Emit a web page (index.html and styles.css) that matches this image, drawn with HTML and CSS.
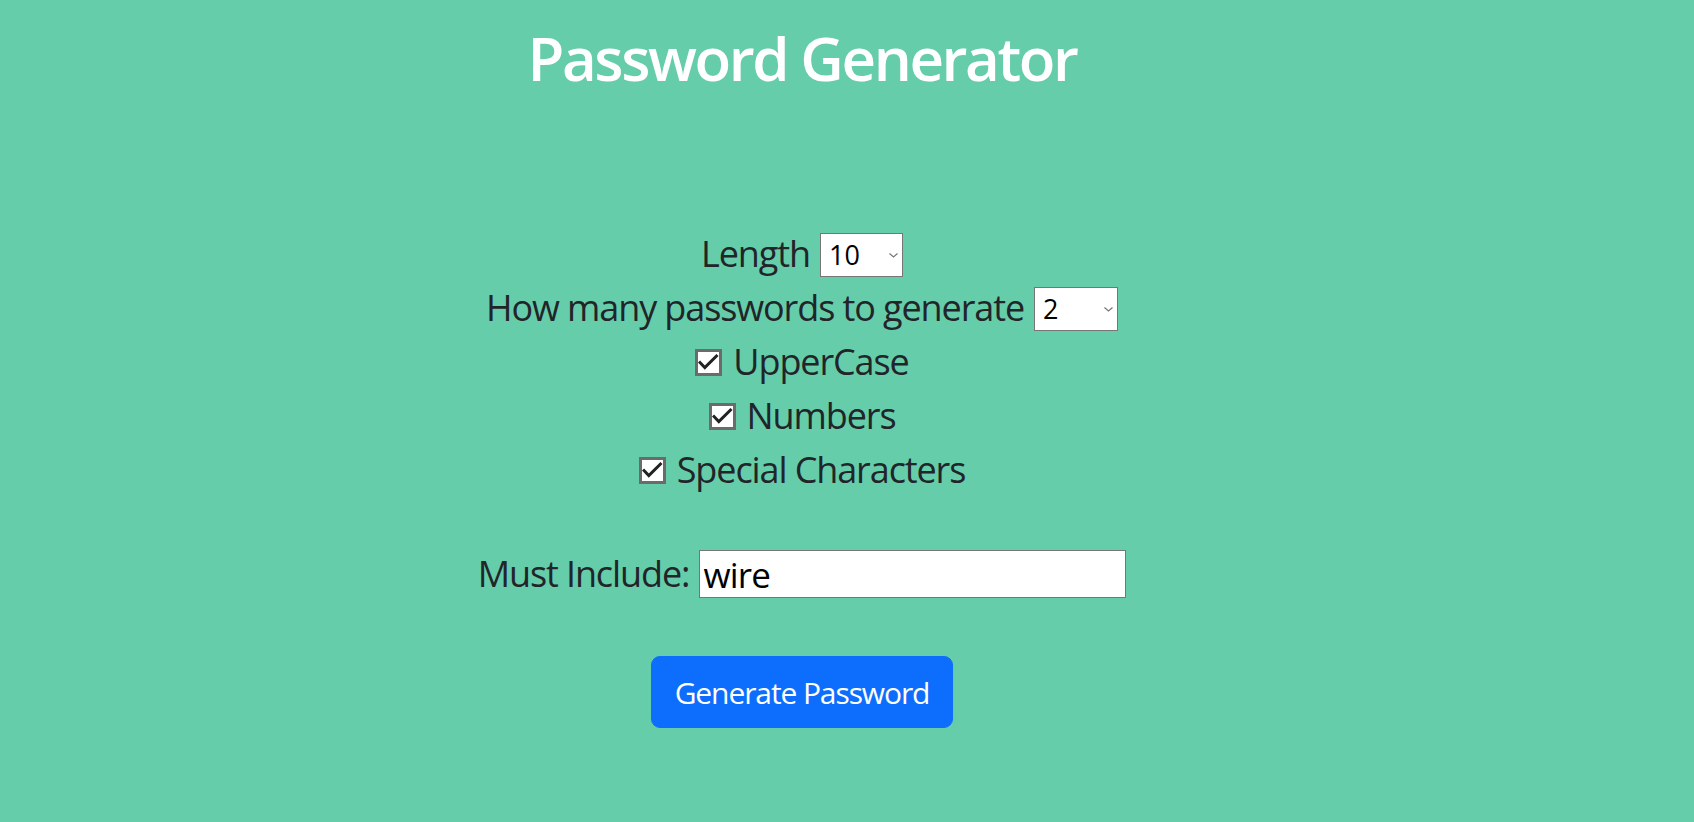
FILE: index.html
```html
<!DOCTYPE html>
<html lang="en">
<head>
<meta charset="utf-8">
<title>Password Generator</title>
<link rel="stylesheet" href="styles.css">
</head>
<body>
<div class="page">
  <h1 class="title">Password Generator</h1>
  <form class="form">
    <div class="row">
      <label for="len">Length</label>
      <span class="select-wrap sel-len">
        <select id="len" class="select"><option>10</option></select>
        <svg class="chev" width="9" height="5" viewBox="0 0 9 5"><path d="M0.5 0.5 L4.5 4 L8.5 0.5" fill="none" stroke="#777" stroke-width="1.2"/></svg>
      </span>
    </div>
    <div class="row">
      <label for="cnt">How many passwords to generate</label>
      <span class="select-wrap sel-cnt">
        <select id="cnt" class="select"><option>2</option></select>
        <svg class="chev" width="9" height="5" viewBox="0 0 9 5"><path d="M0.5 0.5 L4.5 4 L8.5 0.5" fill="none" stroke="#777" stroke-width="1.2"/></svg>
      </span>
    </div>
    <div class="row">
      <label class="check"><span class="box"><svg width="21" height="21" viewBox="0 0 21 21"><path d="M1 9.5 L6.8 15.5 L19.5 3" fill="none" stroke="#222" stroke-width="3"/></svg></span>UpperCase</label>
    </div>
    <div class="row">
      <label class="check"><span class="box"><svg width="21" height="21" viewBox="0 0 21 21"><path d="M1 9.5 L6.8 15.5 L19.5 3" fill="none" stroke="#222" stroke-width="3"/></svg></span>Numbers</label>
    </div>
    <div class="row">
      <label class="check"><span class="box"><svg width="21" height="21" viewBox="0 0 21 21"><path d="M1 9.5 L6.8 15.5 L19.5 3" fill="none" stroke="#222" stroke-width="3"/></svg></span>Special Characters</label>
    </div>
    <div class="row row-include">
      <label for="inc">Must Include:</label>
      <input id="inc" class="text-input" type="text" value="wire">
    </div>
    <div class="actions">
      <button type="button" class="btn">Generate Password</button>
    </div>
  </form>
</div>
</body>
</html>
```
FILE: styles.css
```css
html, body {
  margin: 0;
  padding: 0;
}
body {
  background: #66cdaa;
  color: #212529;
  font-family: "Open Sans", "Noto Sans", sans-serif;
}
.page {
  width: 1604px;
  text-align: center;
}
.title {
  margin: 22px 0 0;
  font-size: 60px;
  line-height: 72px;
  font-weight: 600;
  color: #fff;
  letter-spacing: -2.4px;
}
.form {
  margin-top: 133px;
}
.row {
  display: flex;
  justify-content: center;
  align-items: center;
  height: 54px;
  font-size: 36px;
  line-height: 54px;
  letter-spacing: -1.1px;
}
.select-wrap {
  position: relative;
  display: block;
  margin-left: 10px;
  height: 44px;
  margin-top: 1px;
}
.select {
  appearance: none;
  -webkit-appearance: none;
  box-sizing: border-box;
  height: 44px;
  border: 1px solid #767676;
  border-radius: 0;
  background: #fff;
  color: #000;
  font-family: "Open Sans", sans-serif;
  font-size: 27px;
  padding: 0 0 0 8px;
  margin: 0;
  display: block;
}
.sel-len .select { width: 83px; }
.sel-cnt .select { width: 84px; }
.chev {
  position: absolute;
  right: 5px;
  top: 20px;
}
.check {
  display: flex;
  align-items: center;
}
.box {
  box-sizing: border-box;
  width: 27px;
  height: 27px;
  border: 3px solid #6b6b6b;
  background: #fff;
  margin-right: 11px;
  display: flex;
  align-items: center;
  justify-content: center;
}
.box svg { display: block; }
.row-include {
  margin-top: 50px;
}
.text-input {
  box-sizing: border-box;
  width: 427px;
  height: 48px;
  border: 1px solid #767676;
  background: #fff;
  color: #000;
  font-family: "Open Sans", sans-serif;
  font-size: 35px;
  padding: 0 3px;
  margin: 0 0 0 10px;
  letter-spacing: -0.8px;
}
.actions {
  margin-top: 55px;
  text-align: center;
}
.btn {
  box-sizing: border-box;
  width: 302px;
  height: 72px;
  border: 1.5px solid #0d6efd;
  border-radius: 9px;
  background: #0d6efd;
  color: #fff;
  font-family: "Open Sans", sans-serif;
  font-size: 30px;
  letter-spacing: -1.1px;
  padding: 0;
}
```
